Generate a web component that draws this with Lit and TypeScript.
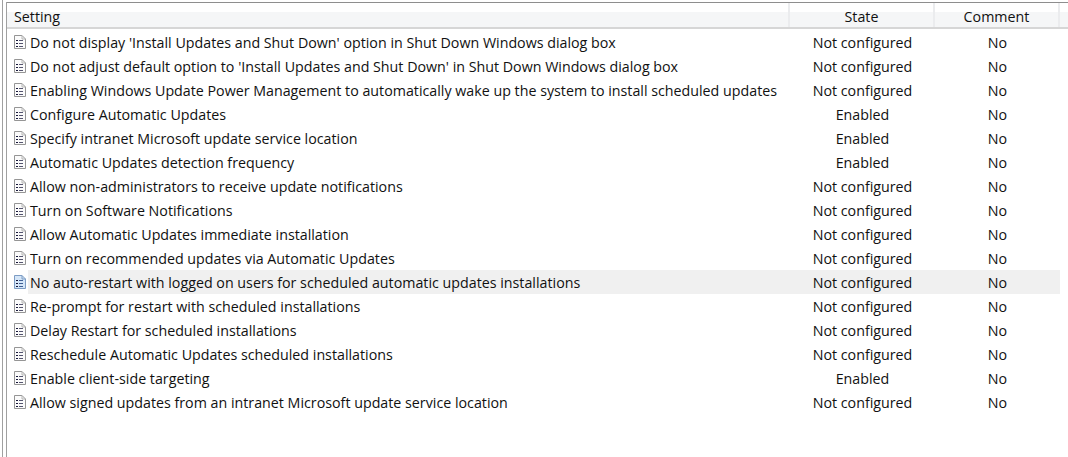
import { LitElement, html, css } from "lit";
import { customElement } from "lit/decorators.js";

type Row = [string, string];
const ROWS: Row[] = [
  ["Do not display 'Install Updates and Shut Down' option in Shut Down Windows dialog box", "Not configured"],
  ["Do not adjust default option to 'Install Updates and Shut Down' in Shut Down Windows dialog box", "Not configured"],
  ["Enabling Windows Update Power Management to automatically wake up the system to install scheduled updates", "Not configured"],
  ["Configure Automatic Updates", "Enabled"],
  ["Specify intranet Microsoft update service location", "Enabled"],
  ["Automatic Updates detection frequency", "Enabled"],
  ["Allow non-administrators to receive update notifications", "Not configured"],
  ["Turn on Software Notifications", "Not configured"],
  ["Allow Automatic Updates immediate installation", "Not configured"],
  ["Turn on recommended updates via Automatic Updates", "Not configured"],
  ["No auto-restart with logged on users for scheduled automatic updates installations", "Not configured"],
  ["Re-prompt for restart with scheduled installations", "Not configured"],
  ["Delay Restart for scheduled installations", "Not configured"],
  ["Reschedule Automatic Updates scheduled installations", "Not configured"],
  ["Enable client-side targeting", "Enabled"],
  ["Allow signed updates from an intranet Microsoft update service location", "Not configured"],
];

const icon = (hl: boolean) => html`<svg class="icon" width="12" height="14" viewBox="0 0 12 14">
  <path d="M.5.5H8L11.5 4V13.5H.5Z" fill="${hl ? "#d5e6f8" : "#fbfbfb"}" stroke="${hl ? "#7d9cc4" : "#959595"}"/>
  <path d="M8 .5V4H11.5" fill="none" stroke="${hl ? "#7d9cc4" : "#b5b5b5"}"/>
  <path d="M2 5.5h2M2 8.5h2M2 11.5h2" stroke="#16163a" fill="none"/>
  <path d="M5 5.5h4M5 8.5h4M5 11.5h4" stroke="${hl ? "#3f5f94" : "#55556f"}" fill="none"/>
</svg>`;

@customElement("app-root")
export class AppRoot extends LitElement {
  static styles = css`
    :host { display: flex; width: 1068px; height: 457px; background: #fff; overflow: hidden;
      font-family: "Open Sans", sans-serif; font-size: 14.25px; color: #111; }
    .gutter { width: 3px; background: #fff; border-left: 1px solid #a0a0a0; margin-left: 2px; flex: none; }
    .main { flex: 1; display: flex; flex-direction: column; min-width: 0; margin-top: 2px; border-left: 1px solid #a0a0a0; }
    .top { height: 1px; background: #8e8e8e; flex: none; }
    .head { display: grid; grid-template-columns: 783px 145px 125px 1fr; height: 26px; flex: none;
      box-sizing: border-box; border-bottom: 2px solid #d6d6d6;
      background: linear-gradient(#fff 0 9px, #f5f6f7 9px); }
    .head div { display: flex; align-items: center; justify-content: center; border-right: 2px solid #ebecee; padding-top: 3px; }
    .head div:first-child { justify-content: flex-start; padding-left: 7px; }
    .head div:last-child { border-right: none; }
    .rows { padding-top: 1px; display: flex; flex-direction: column; }
    .row { display: flex; align-items: center; gap: 2px; height: 24px; padding-left: 7px; }
    .icon { flex: none; }
    .cells { display: grid; grid-template-columns: 762px 145px 125px; align-items: center; height: 24px; width: 1032px; }
    .cells.hl { background: #f0f0f0; }
    .name { white-space: nowrap; padding-left: 2px; }
    .c { text-align: center; }
  `;

  render() {
    return html`
      <div class="gutter"></div>
      <div class="main">
        <div class="top"></div>
        <div class="head"><div>Setting</div><div>State</div><div>Comment</div><div></div></div>
        <div class="rows">
          ${ROWS.map(([n, s], i) => html`<div class="row">
            ${icon(i === 10)}
            <div class="cells ${i === 10 ? "hl" : ""}">
              <div class="name">${n}</div>
              <div class="c">${s}</div><div class="c">No</div>
            </div>
          </div>`)}
        </div>
      </div>`;
  }
}
